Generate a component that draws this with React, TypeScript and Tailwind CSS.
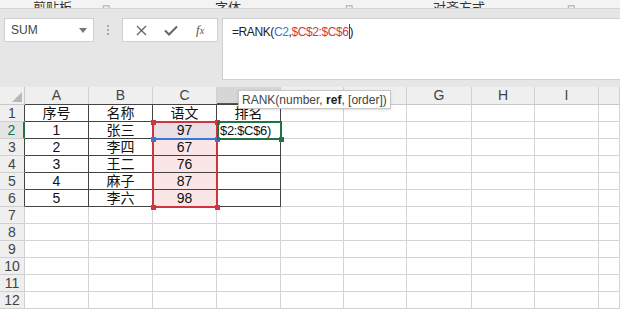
import React from 'react';

const font = { fontFamily: '"Liberation Sans", "Noto Sans CJK SC", sans-serif' };

const colWidths = [64, 64, 64, 64, 63, 63, 65, 63, 64, 21];
const colNames = ['A', 'B', 'C', 'D', 'E', 'F', 'G', 'H', 'I', ''];

const tableData: string[][] = [
    ['序号', '名称', '语文', '排名'],
    ['1', '张三', '97', ''],
    ['2', '李四', '67', ''],
    ['3', '王二', '76', ''],
    ['4', '麻子', '87', ''],
    ['5', '李六', '98', ''],
];

const Handle = ({ x, y, color }: { x: number; y: number; color: string }) => (
    <div
        className={`absolute w-[5px] h-[5px] ${color}`}
        style={{ left: x - 2, top: y - 2 }}
    />
);

const RibbonStrip = () => (
    <div className="h-[9px] overflow-hidden bg-[#f3f3f3] border-b border-[#d4d4d4] relative text-[13px] text-[#333]">
        <div className="flex items-end h-[9px] leading-none">
            <span className="ml-[33px] -mb-[5px]">剪贴板</span>
            <span className="ml-[30px] -mb-[5px] text-[10px] text-[#999]">⊡</span>
            <span className="ml-[105px] -mb-[5px]">字体</span>
            <span className="ml-[104px] -mb-[5px] text-[10px] text-[#999]">⊡</span>
            <span className="ml-[80px] -mb-[5px]">对齐方式</span>
            <span className="ml-[82px] -mb-[5px] text-[10px] text-[#999]">⊡</span>
        </div>
    </div>
);

const FormulaBar = () => (
    <div className="h-[78px] bg-[#e6e6e6] flex items-start pt-[9px] pl-[4px]">
        <div className="w-[90px] h-[24px] bg-white border border-[#d0d0d0] flex items-center justify-between pl-[6px] pr-[6px] text-[12px] text-[#444]">
            <span>SUM</span>
            <svg width="8" height="5" viewBox="0 0 8 5">
                <path d="M0 0 L8 0 L4 5 Z" fill="#777" />
            </svg>
        </div>
        <div className="w-[28px] h-[24px] flex flex-col items-center justify-center gap-[2px]">
            <span className="w-[2px] h-[2px] bg-[#aaa]" />
            <span className="w-[2px] h-[2px] bg-[#aaa]" />
            <span className="w-[2px] h-[2px] bg-[#aaa]" />
        </div>
        <div className="w-[96px] h-[24px] bg-white border border-[#d0d0d0] flex items-center justify-around px-[4px]">
            <svg width="11" height="11" viewBox="0 0 11 11">
                <path d="M1 1 L10 10 M10 1 L1 10" stroke="#666" strokeWidth="1.4" />
            </svg>
            <svg width="14" height="11" viewBox="0 0 14 11">
                <path d="M1 5.5 L5 9.5 L13 1.5" stroke="#666" strokeWidth="2" fill="none" />
            </svg>
            <span className="text-[13px] italic text-[#555]" style={{ fontFamily: '"Liberation Serif", serif' }}>
                f<span className="text-[10px]">x</span>
            </span>
        </div>
        <div className="ml-[4px] flex-1 h-[62px] bg-white border-l border-t border-b border-[#d0d0d0] pl-[9px] pt-[4px] text-[12px] tracking-[-0.4px] text-[#222]">
            <span>=RANK(</span>
            <span className="text-[#3a76d6]">C2</span>
            <span>,</span>
            <span className="text-[#d2384a]">$C$2:$C$6</span>
            <span className="inline-block w-[1px] h-[15px] bg-[#444] align-middle -mt-[2px]" />
            <span>)</span>
        </div>
    </div>
);

const Grid = () => {
    const rows = Array.from({ length: 12 }, (_, i) => i + 1);
    return (
        <div className="relative">
            {/* column headers */}
            <div className="flex h-[18px] bg-[#efefef]">
                <div className="w-[25px] h-full border-r border-b border-[#c8c8c8] relative">
                    <svg className="absolute right-[2px] bottom-[2px]" width="10" height="10" viewBox="0 0 10 10">
                        <path d="M10 0 L10 10 L0 10 Z" fill="#b8b8b8" />
                    </svg>
                </div>
                {colNames.map((c, i) => (
                    <div
                        key={i}
                        className={`h-full flex items-center justify-center text-[14px] text-[#444] border-r border-[#d0d0d0] ${i === 3 ? 'bg-[#d6d6d6] border-b-2 border-b-[#217346]' : 'border-b border-b-[#c8c8c8]'}`}
                        style={{ width: colWidths[i] }}
                    >
                        {c}
                    </div>
                ))}
            </div>
            {rows.map((r) => {
                const data = r <= 6 ? tableData[r - 1] : null;
                return (
                    <div key={r} className="flex h-[17px]">
                        <div
                            className={`w-[25px] h-full flex items-center justify-center text-[14px] border-b border-[#d0d0d0] ${r === 2 ? 'bg-[#e4e4e4] text-[#217346] border-r-2 border-r-[#217346]' : 'bg-[#efefef] text-[#444] border-r'} ${r <= 6 && r !== 2 ? 'border-r-[#444]' : ''}`}
                        >
                            {r}
                        </div>
                        {colWidths.map((w, ci) => {
                            const inTable = data && ci < 4;
                            let bg = 'bg-white';
                            if (ci === 2 && r === 2) bg = 'bg-[#e9dfe6]';
                            else if (ci === 2 && r >= 3 && r <= 6) bg = 'bg-[#fae6e6]';
                            const borderB = inTable ? 'border-b-[#444]' : 'border-b-[#d4d4d4]';
                            const borderR = inTable ? 'border-r-[#444]' : 'border-r-[#d4d4d4]';
                            return (
                                <div
                                    key={ci}
                                    className={`h-full border-r border-b ${borderR} ${borderB} ${bg} flex items-center justify-center text-[14px] text-[#111] leading-none`}
                                    style={{ width: w }}
                                >
                                    {inTable && !(r === 2 && ci === 3) ? data![ci] : ''}
                                </div>
                            );
                        })}
                    </div>
                );
            })}

            {/* table top border */}
            <div className="absolute left-[25px] top-[17px] w-[256px] h-[1px] bg-[#444]" />

            {/* C2:C6 reference range */}
            <div className="absolute left-[152px] top-[34px] w-[66px] h-[87px] border-2 border-[#d0343f]" />
            {/* C2 reference */}
            <div className="absolute left-[153px] top-[51px] w-[64px] h-[2px] bg-[#3a76d6]" />
            <Handle x={153} y={35} color="bg-[#d0343f]" />
            <Handle x={217} y={35} color="bg-[#d0343f]" />
            <Handle x={153} y={120} color="bg-[#d0343f]" />
            <Handle x={217} y={120} color="bg-[#d0343f]" />
            <Handle x={153} y={52} color="bg-[#3a76d6]" />
            <Handle x={217} y={52} color="bg-[#3a76d6]" />

            {/* active cell D2 */}
            <div className="absolute left-[217px] top-[34px] w-[65px] h-[19px] border-2 border-[#217346] flex items-center pl-[1px] text-[13px] tracking-[-0.3px] text-[#111] leading-none bg-transparent">
                $2:$C$6)
            </div>
            <Handle x={281} y={52} color="bg-[#217346]" />

            {/* function tooltip */}
            <div className="absolute left-[238px] top-[3px] h-[19px] px-[3px] bg-white border border-[#c6c6c6] shadow-sm flex items-center text-[12px] text-[#444] whitespace-nowrap">
                <span>RANK(number, <b className="text-[#222]">ref</b>, [order])</span>
            </div>
        </div>
    );
};

const App = () => {
    return (
        <div className="w-[620px] h-[309px] overflow-hidden bg-white" style={font}>
            <RibbonStrip />
            <FormulaBar />
            <Grid />
        </div>
    );
};

export default App;
